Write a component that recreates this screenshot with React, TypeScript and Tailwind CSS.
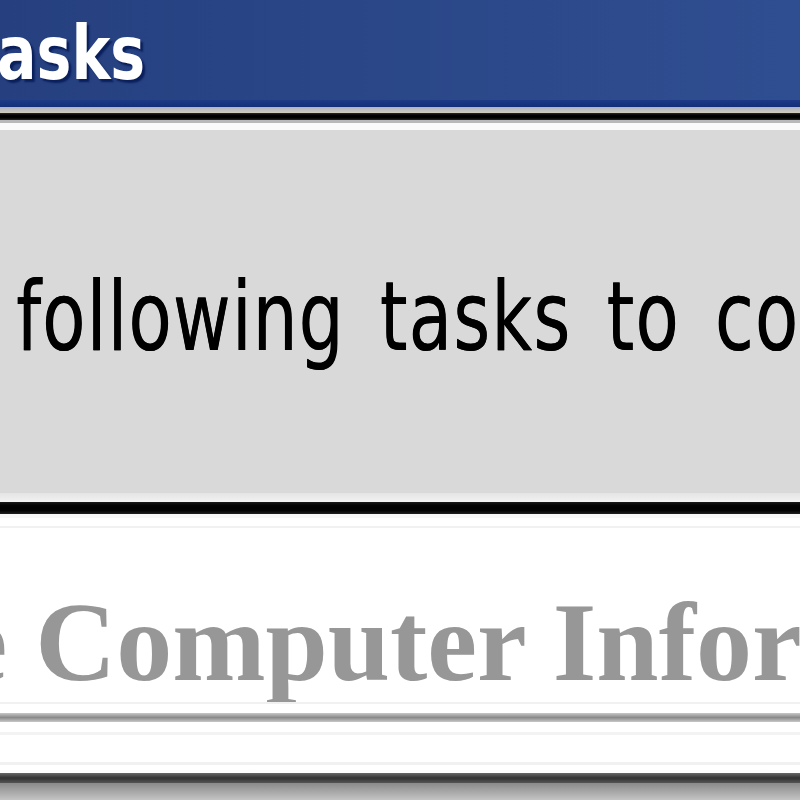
import React from 'react';

// Zoomed-in crop of an old-style wizard dialog: title bar, grey info strip, white list row.
const sans = { fontFamily: '"DejaVu Sans Condensed", "DejaVu Sans", sans-serif' };

function App() {
  return (
    <div className="w-[800px] h-[800px] overflow-hidden bg-white flex flex-col">
      {/* title bar */}
      <div className="h-[100px] shrink-0 bg-gradient-to-r from-[#26407f] to-[#2f4e91] flex items-start overflow-hidden">
        <span
          className="mt-[3px] ml-[-3px] origin-left scale-x-[0.88] whitespace-nowrap text-white font-bold text-[74px] leading-[100px] [text-shadow:3px_3px_2px_#0a1f5c]"
          style={sans}
        >
          asks
        </span>
      </div>
      <div className="h-[7px] shrink-0 bg-gradient-to-b from-[#1c3a86] to-[#132f7a]" />
      <div className="h-[6px] shrink-0 bg-gradient-to-b from-[#aeb4c4] to-[#d2ccba]" />
      <div className="h-[7px] shrink-0 bg-gradient-to-b from-[#2a2a2a] via-black to-[#2a2a2a]" />
      <div className="h-[3px] shrink-0 bg-[#b8b8b8]" />
      <div className="h-[7px] shrink-0 bg-[#fafafa]" />

      {/* grey info strip */}
      <div className="h-[363px] shrink-0 bg-[#d9d9d9] flex items-start overflow-hidden">
        <span
          className="mt-[127px] ml-[16px] origin-left scale-x-[0.81] whitespace-nowrap text-black text-[97px] leading-[120px] tracking-[1.5px] [word-spacing:14px] [text-shadow:0.5px_0_0_#000]"
          style={sans}
        >
          following tasks to complete
        </span>
      </div>
      <div className="h-[9px] shrink-0 bg-gradient-to-b from-[#e4e4e4] to-[#f2f2f2]" />
      <div className="h-[12px] shrink-0 bg-gradient-to-b from-[#1a1a1a] via-black to-[#222]" />
      <div className="h-[4px] shrink-0 bg-[#f8f8f8]" />

      {/* white list row */}
      <div className="h-[195px] shrink-0 flex flex-col overflow-hidden">
        <div className="h-[8px] shrink-0" />
        <div className="h-[2px] shrink-0 bg-[#f1f1f1]" />
        <div className="flex-1 flex items-start overflow-hidden">
          <span
            className="mt-[49px] ml-[-142px] whitespace-nowrap font-bold text-[#979797] text-[112px] leading-[130px]"
            style={{ fontFamily: '"Liberation Serif", serif' }}
          >
            the Computer Information
          </span>
        </div>
        <div className="h-[2px] shrink-0 bg-[#f1f1f1]" />
        <div className="h-[9px] shrink-0" />
      </div>
      <div className="h-[9px] shrink-0 bg-gradient-to-b from-[#c8c8c8] via-[#8a8a8a] to-[#c8c8c8]" />
      <div className="h-[10px] shrink-0" />
      <div className="h-[3px] shrink-0 bg-[#f3f3f3]" />
      <div className="h-[27px] shrink-0" />
      <div className="h-[3px] shrink-0 bg-[#f1f1f1]" />
      <div className="h-[8px] shrink-0" />
      <div className="h-[10px] shrink-0 bg-gradient-to-b from-[#6a6a6a] via-[#333] to-[#555]" />
      <div className="flex-1 bg-gradient-to-b from-[#8a8a8a] to-[#c4c4c4]" />
    </div>
  );
}

export default App;
